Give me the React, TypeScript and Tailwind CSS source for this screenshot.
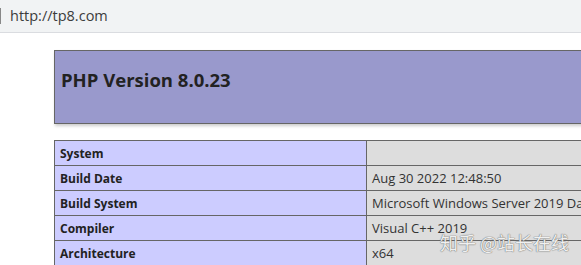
import React from 'react';

const rows: [string, string][] = [
  ['System', ''],
  ['Build Date', 'Aug 30 2022 12:48:50'],
  ['Build System', 'Microsoft Windows Server 2019 Datacenter [10.0.17763]'],
  ['Compiler', 'Visual C++ 2019'],
  ['Architecture', 'x64'],
];

export default function App() {
  return (
    <div className="relative w-[581px] h-[265px] overflow-hidden bg-white font-['Open_Sans','DejaVu_Sans',sans-serif] text-[#222]">
      {/* Address bar */}
      <div className="flex h-[33px] items-center border-b border-[#dadce0] bg-[#f1f3f4]">
        <div className="h-[16px] w-[1px] bg-[#888]"></div>
        <span className="ml-[9px] text-[14.5px] text-[#3c3c3c]">http://tp8.com</span>
      </div>

      {/* Page */}
      <div className="w-[700px] pl-[54px] pt-[17px]">
        <div className="flex h-[74px] items-center border border-[#666] bg-[#9999cc] pl-[6px] pb-[14px] shadow-[1px_2px_3px_#ccc]">
          <h1 className="text-[18.5px] font-bold text-[#222]">PHP Version 8.0.23</h1>
        </div>

        <table className="mt-[16px] w-[640px] table-fixed border-collapse text-[13px]">
          <colgroup>
            <col className="w-[312px]" />
            <col />
          </colgroup>
          <tbody>
            {rows.map(([k, v]) => (
              <tr key={k}>
                <td className="h-[25px] border border-[#666] bg-[#ccccff] px-[5px] pt-[2px] text-[12px] font-bold">{k}</td>
                <td className="h-[25px] overflow-hidden whitespace-nowrap border border-[#666] bg-[#dddddd] px-[5px] pt-[2px] text-[#333]">{v}</td>
              </tr>
            ))}
          </tbody>
        </table>
      </div>

      {/* Watermark */}
      <div className="absolute left-[440px] top-[229px] text-[18px] text-white/90 font-['Noto_Sans_CJK_SC',sans-serif] [text-shadow:0_0_1px_#666,0_0_1px_#666]">
        知乎 @站长在线
      </div>
    </div>
  );
}
